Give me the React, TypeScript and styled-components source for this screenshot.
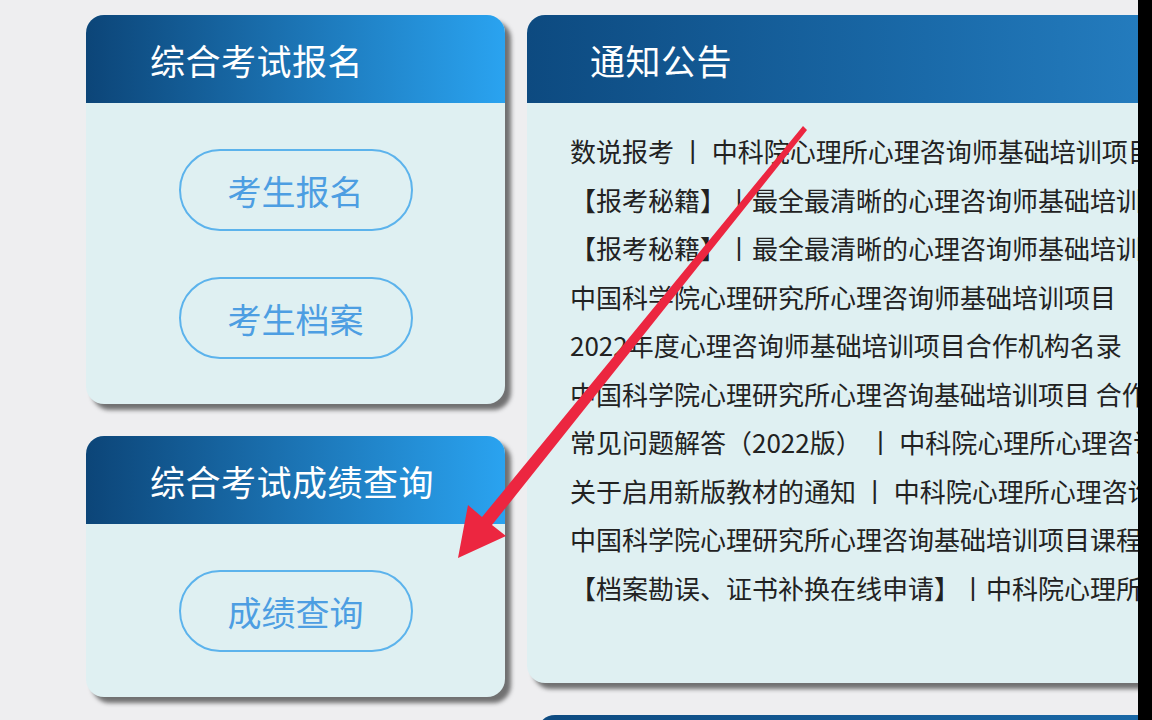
import styled, { createGlobalStyle } from "styled-components";

const GlobalStyle = createGlobalStyle`
  html, body {
    margin: 0;
    padding: 0;
    background: #eeeef0;
  }
  body {
    font-family: "Noto Sans CJK SC", "Noto Sans", sans-serif;
  }
`;

const Screen = styled.div`
  position: relative;
  display: flex;
  width: 1152px;
  height: 720px;
  overflow: hidden;
`;

const Page = styled.div`
  flex: 1;
  display: flex;
  gap: 22px;
  padding: 15px 0 0 86px;
  overflow: hidden;
`;

const EdgeBar = styled.div`
  width: 14px;
  background: #000;
`;

const Column = styled.div<{ $width: number; $gap: number }>`
  flex: 0 0 ${(p) => p.$width}px;
  display: flex;
  flex-direction: column;
  gap: ${(p) => p.$gap}px;
`;

const Card = styled.section`
  flex-shrink: 0;
  background: #dff0f2;
  border-radius: 18px;
  box-shadow: 6px 6px 4px rgba(30, 30, 30, 0.6);
  overflow: hidden;
`;

const CardHeader = styled.header<{ $wide?: boolean }>`
  height: 88px;
  display: flex;
  align-items: center;
  padding-left: ${(p) => (p.$wide ? 63 : 64)}px;
  background: ${(p) =>
    p.$wide
      ? "linear-gradient(90deg, #0d4a80 0%, #1a6aa9 60%, #2680c3 100%)"
      : "linear-gradient(90deg, #0c4578 0%, #1a6fae 45%, #2aa3f0 100%)"};
  color: #fff;
  font-size: 35px;
  letter-spacing: 0.5px;
`;

const ButtonBody = styled.div`
  display: flex;
  flex-direction: column;
  align-items: center;
  gap: 46px;
  padding: 46px 0 45px;
`;

const PillButton = styled.button`
  width: 234px;
  height: 82px;
  border: 2px solid #5cb3ec;
  border-radius: 41px;
  background: transparent;
  color: #4d9ee2;
  font-family: "Noto Sans CJK SC", sans-serif;
  font-size: 34px;
  cursor: pointer;
`;

const NoticeList = styled.ul`
  list-style: none;
  margin: 0;
  padding: 24px 0 71px 43px;
`;

const NoticeItem = styled.li`
  font-size: 26px;
  line-height: 48.5px;
  color: #222;
  white-space: nowrap;
`;

const NextCardTop = styled.div`
  flex-shrink: 0;
  height: 40px;
  margin-left: 10px;
  border-radius: 18px 18px 0 0;
  background: linear-gradient(90deg, #0d4a80 0%, #1a6aa9 100%);
`;

const ArrowLayer = styled.svg`
  position: absolute;
  left: 0;
  top: 0;
  pointer-events: none;
`;

const notices = [
  "数说报考  丨 中科院心理所心理咨询师基础培训项目",
  "【报考秘籍】丨最全最清晰的心理咨询师基础培训项目",
  "【报考秘籍】丨最全最清晰的心理咨询师基础培训项目",
  "中国科学院心理研究所心理咨询师基础培训项目",
  "2022年度心理咨询师基础培训项目合作机构名录",
  "中国科学院心理研究所心理咨询基础培训项目  合作",
  "常见问题解答（2022版） 丨 中科院心理所心理咨询",
  "关于启用新版教材的通知 丨 中科院心理所心理咨询",
  "中国科学院心理研究所心理咨询基础培训项目课程",
  "【档案勘误、证书补换在线申请】丨中科院心理所",
];

const App = () => {
  return (
    <>
      <GlobalStyle />
      <Screen>
        <Page>
          <Column $width={419} $gap={32}>
            <Card>
              <CardHeader>综合考试报名</CardHeader>
              <ButtonBody>
                <PillButton>考生报名</PillButton>
                <PillButton>考生档案</PillButton>
              </ButtonBody>
            </Card>
            <Card>
              <CardHeader>综合考试成绩查询</CardHeader>
              <ButtonBody>
                <PillButton>成绩查询</PillButton>
              </ButtonBody>
            </Card>
          </Column>
          <Column $width={660} $gap={32}>
            <Card>
              <CardHeader $wide>通知公告</CardHeader>
              <NoticeList>
                {notices.map((text, i) => (
                  <NoticeItem key={i}>{text}</NoticeItem>
                ))}
              </NoticeList>
            </Card>
            <NextCardTop />
          </Column>
        </Page>
        <EdgeBar />
        <ArrowLayer width="1152" height="720" viewBox="0 0 1152 720">
          <polygon
            points="458,558 468,505 482,517 803,126 807,130 492,525 506,536"
            fill="#ec2640"
          />
        </ArrowLayer>
      </Screen>
    </>
  );
};

export default App;
